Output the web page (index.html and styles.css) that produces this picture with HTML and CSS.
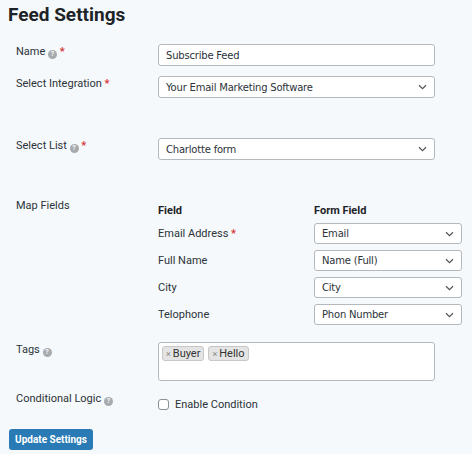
FILE: index.html
```html
<!DOCTYPE html>
<html lang="en">
<head>
    <meta charset="UTF-8">
    <title>Feed Settings</title>
    <link rel="stylesheet" href="styles.css">
</head>
<body>
    <div class="page">
        <h1>Feed Settings</h1>

        <div class="row row-name">
            <div class="label">Name <span class="help">?</span> <span class="req">*</span></div>
            <div class="field">
                <div class="input">Subscribe Feed</div>
            </div>
        </div>

        <div class="row row-integration">
            <div class="label">Select Integration <span class="req">*</span></div>
            <div class="field">
                <div class="select">
                    <span>Your Email Marketing Software</span>
                    <svg class="chev" width="9" height="6" viewBox="0 0 9 6"><path d="M1 1.2 L4.5 4.6 L8 1.2" fill="none" stroke="#555" stroke-width="1.2"/></svg>
                </div>
            </div>
        </div>

        <div class="row row-list">
            <div class="label">Select List <span class="help">?</span> <span class="req">*</span></div>
            <div class="field">
                <div class="select">
                    <span>Charlotte form</span>
                    <svg class="chev" width="9" height="6" viewBox="0 0 9 6"><path d="M1 1.2 L4.5 4.6 L8 1.2" fill="none" stroke="#555" stroke-width="1.2"/></svg>
                </div>
            </div>
        </div>

        <div class="row row-map">
            <div class="label">Map Fields</div>
            <div class="map">
                <div class="map-head">
                    <div>Field</div>
                    <div>Form Field</div>
                </div>
                <div id="map-rows"></div>
            </div>
        </div>

        <div class="row row-tags">
            <div class="label">Tags <span class="help">?</span></div>
            <div class="field">
                <div class="tags">
                    <span class="tag"><span class="x">×</span>Buyer</span>
                    <span class="tag"><span class="x">×</span>Hello</span>
                </div>
            </div>
        </div>

        <div class="row row-cond">
            <div class="label">Conditional Logic <span class="help">?</span></div>
            <div class="field">
                <label class="check"><span class="box"></span>Enable Condition</label>
            </div>
        </div>

        <button class="update-button">Update Settings</button>
    </div>

    <script>
        const mapFields = [
            { name: 'Email Address', value: 'Email', required: true },
            { name: 'Full Name', value: 'Name (Full)' },
            { name: 'City', value: 'City' },
            { name: 'Telophone', value: 'Phon Number' }
        ];

        const mapRows = document.getElementById('map-rows');
        mapFields.forEach(item => {
            const row = document.createElement('div');
            row.className = 'map-row';
            row.innerHTML = `
                <div class="map-name">${item.name}${item.required ? ' <span class="req">*</span>' : ''}</div>
                <div class="select small">
                    <span>${item.value}</span>
                    <svg class="chev" width="9" height="6" viewBox="0 0 9 6"><path d="M1 1.2 L4.5 4.6 L8 1.2" fill="none" stroke="#555" stroke-width="1.2"/></svg>
                </div>
            `;
            mapRows.appendChild(row);
        });
    </script>
</body>
</html>
```

FILE: styles.css
```css
body {
    margin: 0;
    padding: 0;
    background-color: #ffffff;
    font-family: Roboto, "Liberation Sans", Arial, sans-serif;
    color: #2c3338;
}
.page {
    width: 472px;
    height: 454px;
    background-color: #f5f9fc;
    box-sizing: border-box;
    padding: 0 0 0 16px;
}
h1 {
    margin: 0 0 0 -8px;
    padding-top: 3px;
    font-size: 19px;
    line-height: 24px;
    font-weight: 700;
    color: #1d2327;
}
.row {
    display: grid;
    grid-template-columns: 142px 1fr;
}
.label {
    font-size: 11px;
    line-height: 14px;
    padding-top: 1px;
    color: #2c3338;
}
.req {
    color: #d63638;
    font-weight: bold;
}
.help {
    display: inline-block;
    width: 9px;
    height: 9px;
    border-radius: 50%;
    background-color: #a7aaad;
    color: #f5f9fc;
    font-size: 7px;
    line-height: 9px;
    text-align: center;
    font-weight: bold;
    vertical-align: -1px;
}
.input,
.select {
    width: 277px;
    height: 22px;
    box-sizing: border-box;
    background-color: #ffffff;
    border: 1px solid #b4b9be;
    border-radius: 3px;
    font-family: "DejaVu Sans", sans-serif;
    font-size: 10px;
    letter-spacing: -0.2px;
    color: #2c3338;
    padding: 0 7px;
    display: flex;
    align-items: center;
    justify-content: space-between;
}
.select.small {
    width: 148px;
    height: 21px;
}
.chev {
    flex-shrink: 0;
}
.row-name {
    margin-top: 17px;
}
.row-integration {
    margin-top: 10px;
}
.row-list {
    margin-top: 40px;
}
.row-map {
    margin-top: 38px;
}
.map {
    width: 304px;
}
.map-head {
    display: grid;
    grid-template-columns: 156px 1fr;
    font-size: 11px;
    font-weight: bold;
    line-height: 14px;
    padding-top: 6px;
    margin-bottom: 5px;
    color: #1d2327;
}
.map-row {
    display: grid;
    grid-template-columns: 156px 1fr;
    align-items: center;
    margin-bottom: 6px;
}
.map-name {
    font-size: 11px;
    color: #2c3338;
}
.row-tags {
    margin-top: 11px;
}
.tags {
    width: 277px;
    height: 39px;
    box-sizing: border-box;
    background-color: #ffffff;
    border: 1px solid #b4b9be;
    border-radius: 3px;
    padding: 3px 3px;
    display: flex;
    align-items: flex-start;
    gap: 4px;
}
.tag {
    display: inline-flex;
    align-items: center;
    height: 13px;
    padding: 0 3px;
    background-color: #e4e4e4;
    border: 1px solid #c7c7c7;
    border-radius: 3px;
    font-size: 11px;
    color: #333;
}
.tag .x {
    color: #888;
    font-size: 9px;
    margin-right: 2px;
}
.row-cond {
    margin-top: 10px;
}
.check {
    display: flex;
    align-items: center;
    font-size: 11px;
    color: #2c3338;
    padding-top: 7px;
}
.box {
    width: 11px;
    height: 11px;
    box-sizing: border-box;
    border: 1px solid #8c8f94;
    border-radius: 3px;
    background-color: #ffffff;
    margin-right: 6px;
}
.update-button {
    display: block;
    margin: 18px 0 0 -7px;
    width: 84px;
    height: 21px;
    padding: 0;
    border: none;
    border-radius: 3px;
    background-color: #2a7bb5;
    color: #ffffff;
    font-family: Roboto, "Liberation Sans", Arial, sans-serif;
    font-size: 10px;
    font-weight: bold;
    cursor: pointer;
}
```
